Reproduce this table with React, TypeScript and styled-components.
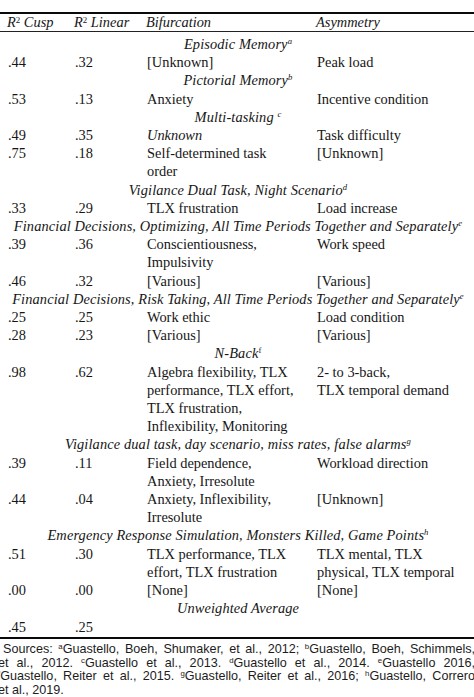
import React from "react";
import styled, { createGlobalStyle } from "styled-components";

const Global = createGlobalStyle`
  html, body { margin: 0; padding: 0; background: #fff; }
  body { width: 474px; height: 697px; overflow: hidden; }
`;

const Page = styled.div`
  width: 474px;
  height: 697px;
  overflow: hidden;
  background: #fff;
  color: #161616;
  display: flex;
  flex-direction: column;
`;

const TitleLine = styled.div`
  height: 12px;
  min-height: 12px;
  max-height: 12px;
  overflow: hidden;
  flex: none;
  display: flex;
  align-items: flex-end;
`;

const TitleText = styled.div`
  flex: none;
  margin-bottom: 12px;
  padding-left: 2px;
  font-family: "Liberation Sans", Arial, sans-serif;
  font-size: 13px;
  line-height: 14px;
  height: 14px;
  white-space: nowrap;
  color: #222;
`;

const Table = styled.div`
  flex: none;
  border-top: 2.5px solid #0a0a0a;
  border-bottom: 2.5px solid #0a0a0a;
  font-family: "Liberation Serif", "Times New Roman", serif;
  font-size: 14.4px;
`;

const HeadRow = styled.div`
  display: grid;
  grid-template-columns: 67px 72px 170px 1fr;
  padding-left: 7px;
  line-height: 17px;
  border-bottom: 1px solid #222;
  font-style: italic;
`;

const HeadCell = styled.div`
  white-space: nowrap;
`;

const UpSup = styled.sup`
  font-style: normal;
  font-size: 0.62em;
  line-height: 0;
  vertical-align: 0.5em;
`;

const Body = styled.div`
  padding-top: 3px;
  padding-bottom: 1px;
  line-height: 18.2px;
`;

const SectionTitle = styled.div`
  text-align: center;
  font-style: italic;
  white-space: nowrap;
  letter-spacing: 0.12px;
  padding-left: 2px;
`;

const Row = styled.div`
  display: grid;
  grid-template-columns: 67px 72px 170px 1fr;
  padding-left: 8px;
`;

const Cell = styled.div<{ $italic?: boolean }>`
  white-space: nowrap;
  font-style: ${(p) => (p.$italic ? "italic" : "normal")};
`;

const Sup = styled.sup<{ $upright?: boolean }>`
  font-size: 0.6em;
  line-height: 0;
  vertical-align: 0.55em;
  font-style: ${(p) => (p.$upright ? "normal" : "italic")};
`;

const Footnote = styled.div`
  flex: none;
  margin-left: -2px;
  width: 477px;
  padding-top: 4px;
  font-family: "Liberation Sans", Arial, sans-serif;
  font-size: 12.6px;
  line-height: 13.8px;
  color: #1c1c1c;
`;

const FootLine = styled.div<{ $last?: boolean; $indent?: number }>`
  white-space: nowrap;
  text-align: ${(p) => (p.$last ? "left" : "justify")};
  text-align-last: ${(p) => (p.$last ? "left" : "justify")};
  text-indent: ${(p) => p.$indent ?? 0}px;
`;

const FSup = styled.sup`
  font-size: 0.62em;
  line-height: 0;
  vertical-align: 0.5em;
`;

type RowData = { c: string; l: string; b: React.ReactNode; a: React.ReactNode; bItalic?: boolean };
type Section = { title: string; sup: string; space?: boolean; upright?: boolean; rows: RowData[] };

const sections: Section[] = [
  { title: "Episodic Memory", sup: "a", rows: [{ c: ".44", l: ".32", b: "[Unknown]", a: "Peak load" }] },
  { title: "Pictorial Memory", sup: "b", rows: [{ c: ".53", l: ".13", b: "Anxiety", a: "Incentive condition" }] },
  {
    title: "Multi-tasking",
    sup: "c",
    space: true,
    rows: [
      { c: ".49", l: ".35", b: "Unknown", a: "Task difficulty", bItalic: true },
      { c: ".75", l: ".18", b: <>Self-determined task<br />order</>, a: "[Unknown]" },
    ],
  },
  {
    title: "Vigilance Dual Task, Night Scenario",
    sup: "d",
    rows: [{ c: ".33", l: ".29", b: "TLX frustration", a: "Load increase" }],
  },
  {
    title: "Financial Decisions, Optimizing, All Time Periods Together and Separately",
    sup: "e",
    rows: [
      { c: ".39", l: ".36", b: <>Conscientiousness,<br />Impulsivity</>, a: "Work speed" },
      { c: ".46", l: ".32", b: "[Various]", a: "[Various]" },
    ],
  },
  {
    title: "Financial Decisions, Risk Taking, All Time Periods Together and Separately",
    sup: "e",
    rows: [
      { c: ".25", l: ".25", b: "Work ethic", a: "Load condition" },
      { c: ".28", l: ".23", b: "[Various]", a: "[Various]" },
    ],
  },
  {
    title: "N-Back",
    sup: "f",
    upright: true,
    rows: [
      {
        c: ".98",
        l: ".62",
        b: <>Algebra flexibility, TLX<br />performance, TLX effort,<br />TLX frustration,<br />Inflexibility, Monitoring</>,
        a: <>2- to 3-back,<br />TLX temporal demand</>,
      },
    ],
  },
  {
    title: "Vigilance dual task, day scenario, miss rates, false alarms",
    sup: "g",
    rows: [
      { c: ".39", l: ".11", b: <>Field dependence,<br />Anxiety, Irresolute</>, a: "Workload direction" },
      { c: ".44", l: ".04", b: <>Anxiety, Inflexibility,<br />Irresolute</>, a: "[Unknown]" },
    ],
  },
  {
    title: "Emergency Response Simulation, Monsters Killed, Game Points",
    sup: "h",
    rows: [
      {
        c: ".51",
        l: ".30",
        b: <>TLX performance, TLX<br />effort, TLX frustration</>,
        a: <>TLX mental, TLX<br />physical, TLX temporal</>,
      },
      { c: ".00", l: ".00", b: "[None]", a: "[None]" },
    ],
  },
];

export default function App() {
  return (
    <Page>
      <Global />
      <TitleLine>
        <TitleText>Table 3. Summary of Results for Cusp Models of Fatigue</TitleText>
      </TitleLine>
      <Table>
        <HeadRow>
          <HeadCell>
            R<UpSup>2</UpSup> Cusp
          </HeadCell>
          <HeadCell>
            R<UpSup>2</UpSup> Linear
          </HeadCell>
          <HeadCell>Bifurcation</HeadCell>
          <HeadCell>Asymmetry</HeadCell>
        </HeadRow>
        <Body>
          {sections.map((s, i) => (
            <React.Fragment key={i}>
              <SectionTitle>
                {s.title}
                {s.space ? " " : ""}
                <Sup $upright={s.upright}>{s.sup}</Sup>
              </SectionTitle>
              {s.rows.map((r, j) => (
                <Row key={j}>
                  <Cell>{r.c}</Cell>
                  <Cell>{r.l}</Cell>
                  <Cell $italic={r.bItalic}>{r.b}</Cell>
                  <Cell>{r.a}</Cell>
                </Row>
              ))}
            </React.Fragment>
          ))}
          <SectionTitle>Unweighted Average</SectionTitle>
          <Row>
            <Cell>.45</Cell>
            <Cell>.25</Cell>
            <Cell />
            <Cell />
          </Row>
        </Body>
      </Table>
      <Footnote>
        <FootLine $indent={5}>
          Sources: <FSup>a</FSup>Guastello, Boeh, Shumaker, et al., 2012; <FSup>b</FSup>Guastello, Boeh, Schimmels,
        </FootLine>
        <FootLine>
          et al., 2012. <FSup>c</FSup>Guastello et al., 2013. <FSup>d</FSup>Guastello et al., 2014. <FSup>e</FSup>Guastello 2016,
        </FootLine>
        <FootLine>
          <FSup>f</FSup>Guastello, Reiter et al., 2015. <FSup>g</FSup>Guastello, Reiter et al., 2016; <FSup>h</FSup>Guastello, Correro
        </FootLine>
        <FootLine $last>et al., 2019.</FootLine>
      </Footnote>
    </Page>
  );
}
